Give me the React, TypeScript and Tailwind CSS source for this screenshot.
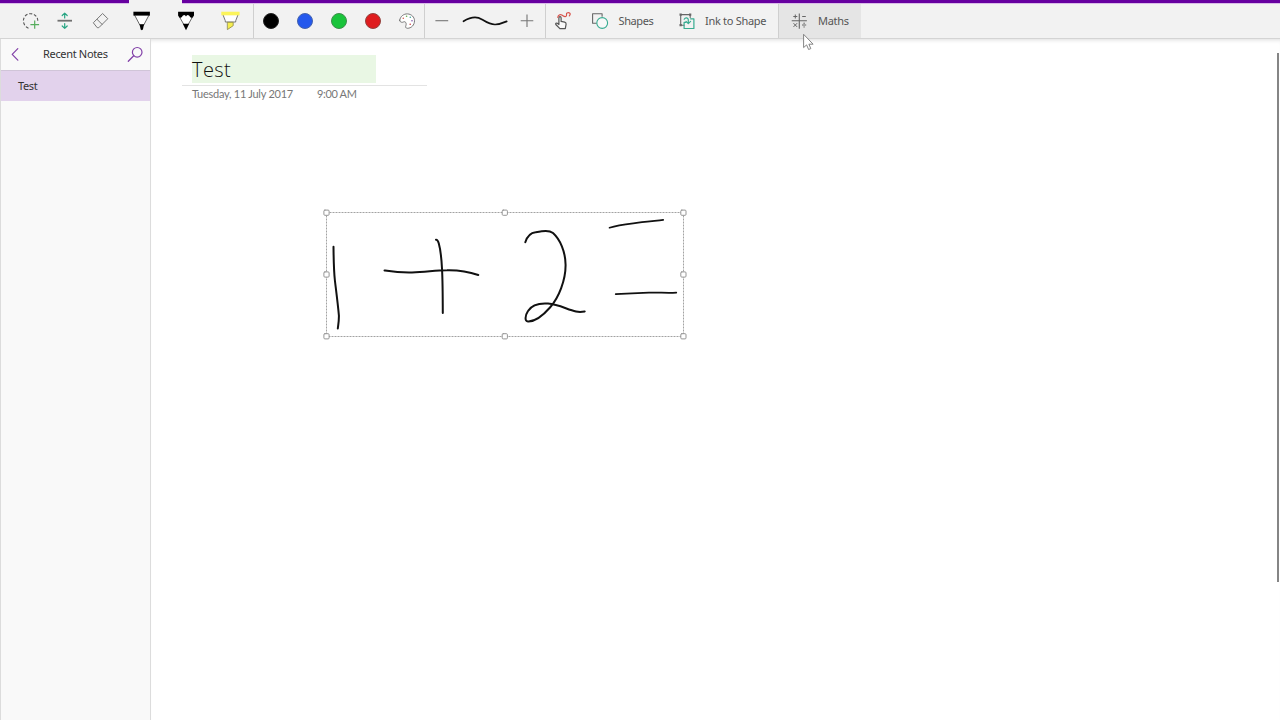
import type { ReactNode } from "react";

type GlyphProps = { box: string; className: string; children: ReactNode };

function Glyph({ box, className, children }: GlyphProps) {
  return (
    <svg viewBox={box} className={"block shrink-0 " + className} fill="none" strokeLinecap="round" strokeLinejoin="round">
      {children}
    </svg>
  );
}

function PenTools() {
  return (
    <div className="flex h-full w-[254px] shrink-0 items-center border-r border-[#cfcfcf] pl-[20px]">
      <Glyph box="20 9 24 24" className="mr-[10px] h-6 w-6">
        <path d="M28.500 28.200C25.700 27.200 23.400 24.200 23.400 20.900c0-4.200 3.200-7.200 7.200-7.200s7.200 3.100 7.200 7.200" stroke="#555" strokeWidth="1.100" strokeDasharray="3 1.800" strokeLinecap="butt" />
        <path d="M34.700 20.500v8.200M30.400 24.700h8.700" stroke="#55ad5c" strokeWidth="1.200" strokeLinecap="butt" />
      </Glyph>
      <Glyph box="54 9 22 24" className="mr-[14px] h-6 w-[22px]">
        <path d="M57.500 20.700h14.500" stroke="#707070" strokeWidth="1.800" strokeLinecap="butt" />
        <path d="M64.700 18v-4.800M62.200 15.500l2.500-2.400 2.500 2.400M64.700 23.500v4.800M62.200 26l2.500 2.400 2.500-2.400" stroke="#27a583" strokeWidth="1.200" />
      </Glyph>
      <Glyph box="90 9 22 24" className="mr-[18px] h-6 w-[22px]">
        <path d="M93.600 22.500l9-9 5.200 5.200-9 9h-1.200zM97 19.300l5.100 5.100" stroke="#777" strokeWidth="1" />
      </Glyph>
      <Glyph box="130 9 24 24" className="mr-[20px] h-6 w-6">
        <path d="M134.800 15.500l5.200 9.800h3.600l5.200-9.800" fill="#fff" stroke="#666" strokeWidth="1" />
        <path d="M133.400 11.700h16.500v3.900h-16.500z" fill="#000" />
        <path d="M139.500 24.300h4.600l-1.200 5.300-1.100.7-1.100-.7z" fill="#000" />
      </Glyph>
      <Glyph box="174 9 24 24" className="mr-[20px] h-6 w-6">
        <path d="M179 16l4.800 8.500h4.400l4.800-8.500" fill="#fff" stroke="#666" strokeWidth="1" />
        <path d="M178.100 11.700h15.900v3.800l-1.700 2.300c-1.700 0-2.500-.9-3-2.100-1.500-1-2.200-.7-3.300.7-1.100-1.400-1.800-1.700-3.300-.7-.5 1.200-1.300 2.100-3 2.100l-1.600-2.300z" fill="#000" />
        <path d="M182.800 23.700h6.400l-3.200 6.600z" fill="#000" />
      </Glyph>
      <Glyph box="218 9 24 24" className="h-6 w-6">
        <path d="M223.200 15.300l2.100 5.500v1.200h10.400v-1.200l2.100-5.500" fill="#fff" stroke="#777" strokeWidth="1" />
        <path d="M221.300 11.700h18.300v3.600h-18.300z" fill="#fbf45a" />
        <path d="M227.700 22.300h5.500v3.400l-5.500 3.700z" fill="#f6ee50" stroke="#8b8745" strokeWidth=".8" />
      </Glyph>
    </div>
  );
}

function Palette() {
  return (
    <div className="flex h-full w-[171px] shrink-0 items-center border-r border-[#cfcfcf] pl-[9px]">
      <div className="flex gap-[18px]">
        <span className="h-[16px] w-[16px] rounded-full border border-[#222] bg-black" />
        <span className="h-[16px] w-[16px] rounded-full border border-[#4563ae] bg-[#2458ed]" />
        <span className="h-[16px] w-[16px] rounded-full border border-[#3e8e4b] bg-[#19c43b]" />
        <span className="h-[16px] w-[16px] rounded-full border border-[#93433f] bg-[#df1c1e]" />
      </div>
      <Glyph box="397 11 20 20" className="ml-[16px] h-5 w-5">
        <path d="M399.700 20.200c.5-3.700 3.900-6.500 7.800-6.300 4 .2 7 3.200 7 6.900 0 4.200-3.200 7.500-7.100 7.500-1.700 0-2.100-1.400-1.500-2.700.5-1.300.4-3.100-.8-3.700-1.100-.6-1.900.4-2.700.4-1.500 0-2.900-.6-2.700-2.100z" fill="#fff" stroke="#6b6b6b" strokeWidth=".9" />
        <circle cx="403.300" cy="18.300" r=".8" fill="#d45a4e" />
        <circle cx="406.600" cy="16.300" r=".8" fill="#62b04b" />
        <circle cx="410.300" cy="17.200" r=".8" fill="#3aa8a0" />
        <circle cx="412" cy="20.800" r=".8" fill="#8255ac" />
        <circle cx="410.200" cy="24.200" r=".8" fill="#cf3d46" />
      </Glyph>
    </div>
  );
}

function Thickness() {
  return (
    <div className="flex h-full w-[121px] shrink-0 items-center border-r border-[#cfcfcf] pl-[8px]">
      <Glyph box="433 11 18 20" className="h-5 w-[18px]">
        <path d="M435.400 20.700h12.800" stroke="#757575" strokeWidth="1.100" strokeLinecap="butt" />
      </Glyph>
      <Glyph box="460 9 50 24" className="ml-[9px] h-6 w-[50px]">
        <path d="M463.500 21.300c6-3.700 13-5.200 18.500-1.900 5.300 3.200 8.200 5.300 13.200 5.100 4.300-.2 8-1.600 11.500-3.100" stroke="#111" strokeWidth="1.700" />
      </Glyph>
      <Glyph box="518 11 18 20" className="ml-[8px] h-5 w-[18px]">
        <path d="M520.700 20.700h12.600M527 14.400v12.600" stroke="#757575" strokeWidth="1.100" strokeLinecap="butt" />
      </Glyph>
    </div>
  );
}

function InsertTools() {
  return (
    <div className="flex h-full w-[233px] shrink-0 items-center border-r border-[#cfcfcf] pl-[4px]">
      <Glyph box="550 9 24 24" className="h-6 w-6">
        <path d="M558.900 24.500V17.800c0-1.500 2.200-1.500 2.200 0v3.600l3.600.7c1 .3 1.500 1 1.400 2l-.8 4.600h-5.400l-4.100-4.200c-.6-1.100.5-1.900 1.500-1.200z" fill="#f8f8f8" stroke="#555" strokeWidth="1.200" />
        <path d="M557.800 17.300c.4-2.200 2.200-3.200 4-2.300 1.600.9 2.300 2 4 1.500 1.800-.7-.2-2.700 1.200-3.500 1.500-.6 3.400-.2 3.200 1.100-.1.700-.4 1.200-.9 1.700" stroke="#d8534b" strokeWidth="1.200" />
      </Glyph>
      <Glyph box="590 9 22 24" className="ml-[16px] h-6 w-[22px]">
        <path d="M596.300 23.200h-3.700V13.700h9.500v2.500" stroke="#666" strokeWidth="1.100" />
        <circle cx="602.200" cy="23" r="5.400" fill="#f8f8f8" stroke="#38ac91" strokeWidth="1.100" />
      </Glyph>
      <span className="ml-[6px] w-[59px] text-[11px] tracking-[-0.4px]"><span className="pl-[0.5px]">Shapes</span></span>
      <Glyph box="677 9 22 24" className="h-6 w-[22px]">
        <path d="M684 25.200h-3.300V14.600h9.500v3" stroke="#666" strokeWidth="1.100" />
        <path d="M679.500 13.400h2.300v2.300h-2.300zM689 13.400h2.300v2.300h-2.300zM679.500 24h2.300v2.300h-2.300z" fill="#666" />
        <path d="M686 22.300h-1.900v6.200h9.800V18.800h-3.300" stroke="#38ac91" strokeWidth="1.200" />
        <path d="M684.200 19.200c1-1.900 4-1.700 4.100.6v3.600M686 21.300l2.300 2.300 2.300-2.300" stroke="#38ac91" strokeWidth="1.200" />
      </Glyph>
      <span className="ml-[6px] text-[11px] tracking-[-0.3px]">Ink to Shape</span>
    </div>
  );
}

function MathsButton() {
  return (
    <button className="flex h-full w-[82px] shrink-0 items-center bg-[#e5e5e5] pl-[10px] text-left">
      <Glyph box="789 9 22 24" className="h-6 w-[22px]">
        <path d="M791.700 20.700h15.200M799.300 13.500v15.200" stroke="#666" strokeWidth="1.100" strokeLinecap="butt" />
        <path d="M793.300 16.500h4M795.300 14.500v4M802.200 16.500h3.600M793.500 23.200l3.600 3.700M797.100 23.200l-3.600 3.700M802 25h4.200" stroke="#666" strokeWidth="1" strokeLinecap="butt" />
        <circle cx="804.100" cy="23.200" r=".7" fill="#666" />
        <circle cx="804.100" cy="26.900" r=".7" fill="#666" />
      </Glyph>
      <span className="ml-[7px] text-[11px] tracking-[-0.3px]">Maths</span>
    </button>
  );
}

function Sidebar() {
  return (
    <aside className="flex w-[151px] shrink-0 flex-col border-x border-[#dcdcdc] bg-[#f9f9f9] text-[11px] text-[#333]">
      <div className="flex h-[31px] items-center pl-[8px]">
        <Glyph box="9 44 16 22" className="h-[22px] w-4">
          <path d="M17.800 48.700L12.200 54.400l5.600 5.800" stroke="#8240a8" strokeWidth="1.200" />
        </Glyph>
        <span className="ml-[18px] w-[82px] whitespace-nowrap tracking-[-0.33px]">Recent Notes</span>
        <Glyph box="125 44 20 22" className="h-[22px] w-5">
          <circle cx="137.200" cy="52.300" r="4.800" stroke="#8240a8" strokeWidth="1.200" />
          <path d="M133.700 55.800l-5.400 5.400" stroke="#8240a8" strokeWidth="1.300" />
        </Glyph>
      </div>
      <div className="flex h-[31px] items-center border-t border-[#d0c5d8] bg-[#e2d2ec] pl-[17px] tracking-[-0.35px]">Test</div>
    </aside>
  );
}

const handles = [
  [326.5, 212.7], [504.8, 212.7], [683.4, 212.7],
  [326.5, 274.5], [683.4, 274.5],
  [326.5, 336.3], [504.8, 336.3], [683.4, 336.3],
];

function InkSelection() {
  return (
    <Glyph box="320 206 370 138" className="ml-[169px] mt-[104px] h-[138px] w-[370px]">
      <path d="M326.500 212.500H683.500V336.500H326.500z" stroke="#a2a2a2" strokeWidth="1" strokeDasharray="2 1" strokeLinecap="butt" />
      <g stroke="#111" strokeWidth="2">
        <path d="M333.500 246.700C333.600 257 333.700 270 334.900 280.500C336.300 292 338.100 306 338.900 315.500C339 321 338.300 324.500 337.800 328.500" />
        <path d="M384.500 270.400C391 271.400 399 272.700 412 272.400C426 272.100 435 270.300 447 270.300C459 270 468 271.500 478.300 275" />
        <path d="M436 239.700C437.600 239.500 438.200 241.300 438.800 243.600C442.300 256 442.700 278 442.800 313" />
        <path d="M525.300 242.200C527 237 530.500 232.700 535.500 232.200C543 231 549 230 553 233C560 239.300 565.500 251.500 565.600 265C565.600 280 559 297.500 550 307.500C543 315.500 534.500 321.700 528 321.400C524.500 321.500 525 315.500 528 311C532 304.500 539 303 548 303.600C559 304.500 567.500 309.700 576 311.500C579 312.200 582 312 584.700 311.500" />
        <path d="M609.500 227.700C620 224.400 631 223.800 642 222.200C650 221.100 657 220.700 663.200 219.900" strokeWidth="1.700" />
        <path d="M615.700 294.200C627 293.400 638 292.900 649 292.600C659 292.300 667 293.300 676.300 292.600" strokeWidth="1.700" />
      </g>
      {handles.map(([x, y]) => (
        <rect key={x + "-" + y} x={x - 2.6} y={y - 2.6} width="5.200" height="5.200" rx="1" fill="#fff" stroke="#969696" strokeWidth="1" />
      ))}
    </Glyph>
  );
}

function NotePage() {
  return (
    <main className="flex min-w-0 flex-1 justify-between bg-white font-[Lato,sans-serif] shadow-[inset_0_4px_4px_-3px_#dedede]">
      <div className="pt-[16px]">
        <div className="ml-[31px] h-[31px] w-[245px] border-b border-[#e3e3e3] pl-[10px]">
          <h1 className="h-[28px] w-[184px] bg-[#e9f7e4] font-['Open_Sans',sans-serif] text-[20px] font-light leading-[29px] tracking-[0.4px] text-[#111]">Test</h1>
        </div>
        <div className="flex h-[17px] items-center pl-[41px] text-[11px] text-[#777]">
          <span className="w-[125px] tracking-[-0.26px]">Tuesday, 11 July 2017</span>
          <span className="tracking-[-0.35px]">9:00 AM</span>
        </div>
        <div className="-mt-px">
          <InkSelection />
        </div>
      </div>
      <div className="mr-[1px] mt-[14px] h-[529px] w-[2px] bg-[#858585]" />
    </main>
  );
}

export default function App() {
  return (
    <div className="relative flex h-[720px] w-[1280px] flex-col overflow-hidden bg-white font-['Noto_Sans',sans-serif] text-[#555]">
      <div className="flex h-[4px] shrink-0 border-b border-[#d9bce8] bg-[#6700a0]">
        <div className="ml-[129px] h-[4px] w-[53px] bg-[#f2f2f2]" />
      </div>
      <header className="flex h-[35px] shrink-0 items-center border-b border-[#d4d4d4] bg-[#f2f2f2]">
        <PenTools />
        <Palette />
        <Thickness />
        <InsertTools />
        <MathsButton />
      </header>
      <div className="flex min-h-0 flex-1">
        <Sidebar />
        <NotePage />
      </div>
      <svg viewBox="800 31 16 20" className="absolute left-[800px] top-[31px] h-5 w-4" fill="none">
        <path d="M803.600 34.300v13.300l3-2.700 2 4.600 2.200-.9-1.900-4.400h4.200z" fill="#fff" stroke="#777" strokeWidth=".9" />
      </svg>
    </div>
  );
}
